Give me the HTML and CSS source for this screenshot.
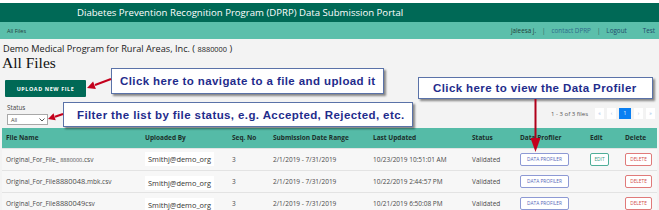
FILE: index.html
```html
<!DOCTYPE html>
<html lang="en">
<head>
<meta charset="utf-8">
<title>All Files - DPRP</title>
<link rel="stylesheet" href="styles.css">
</head>
<body>
<div class="app">
  <header class="brand">Diabetes Prevention Recognition Program (DPRP) Data Submission Portal</header>
  <nav class="subnav">
    <span class="crumb">All Files</span>
    <span class="user">
      <span>jaleesa j.</span><span class="sep">|</span><span class="link">contact DPRP</span><span class="sep">|</span><span class="link2">Logout</span><span class="test">Test</span>
    </span>
  </nav>
  <main class="main">
    <div class="org">Demo Medical Program for Rural Areas, Inc. ( <span class="orgnum">8880000</span> )</div>
    <h1 class="title">All Files</h1>
    <button class="upload">UPLOAD NEW FILE</button>
    <div class="filterbar">
      <div class="status">
        <div class="status-label">Status</div>
        <div class="select"><span>All</span>
          <svg class="chev" width="6" height="4" viewBox="0 0 6 4"><path d="M0.5 0.5 L3 3 L5.5 0.5" fill="none" stroke="#555" stroke-width="1"/></svg>
        </div>
      </div>
      <div class="pager">
        <span class="count">1 - 3 of 3 files</span>
        <span class="pg">«</span>
        <span class="pg">‹</span>
        <span class="pg active">1</span>
        <span class="pg">›</span>
        <span class="pg">»</span>
      </div>
    </div>
    <table class="files">
      <colgroup>
        <col class="w-name"><col class="w-by"><col class="w-seq"><col class="w-range"><col class="w-upd"><col class="w-status"><col class="w-dp"><col class="w-edit"><col class="w-del">
      </colgroup>
      <thead>
        <tr><th>File Name</th><th>Uploaded By</th><th>Seq. No</th><th>Submission Date Range</th><th>Last Updated</th><th>Status</th><th>Data Profiler</th><th>Edit</th><th>Delete</th></tr>
      </thead>
      <tbody>
        <tr>
          <td>Original_For_File_ <span class="num-sm">8880000</span>.csv</td>
          <td><span class="who">Smithj@demo_org</span></td>
          <td>3</td>
          <td>2/1/2019 - 7/31/2019</td>
          <td>10/23/2019 10:51:01 AM</td>
          <td>Validated</td>
          <td><span class="btn dp">DATA PROFILER</span></td>
          <td><span class="btn edit">EDIT</span></td>
          <td><span class="btn del">DELETE</span></td>
        </tr>
        <tr>
          <td>Original_For_File<span class="num-lg">8880048</span>.mbk.csv</td>
          <td><span class="who low">Smithj@demo_org</span></td>
          <td>3</td>
          <td>2/1/2019 - 7/31/2019</td>
          <td>10/22/2019 2:44:57 PM</td>
          <td>Validated</td>
          <td><span class="btn dp">DATA PROFILER</span></td>
          <td></td>
          <td><span class="btn del">DELETE</span></td>
        </tr>
        <tr>
          <td>Original_For_File<span class="num-lg">8880049</span>csv</td>
          <td><span class="who low">Smithj@demo_org</span></td>
          <td>3</td>
          <td>2/1/2019 - 7/31/2019</td>
          <td>10/21/2019 6:50:08 PM</td>
          <td>Validated</td>
          <td><span class="btn dp">DATA PROFILER</span></td>
          <td></td>
          <td><span class="btn del">DELETE</span></td>
        </tr>
      </tbody>
    </table>
  </main>

  <div class="callout c1">Click here to navigate to a file and upload it</div>
  <div class="callout c2">Filter the list by file status, e.g. Accepted, Rejected, etc.</div>
  <div class="callout c3">Click here to view the Data Profiler</div>

  <svg class="arrows" width="659" height="210" viewBox="0 0 659 210">
    <line x1="111" y1="79" x2="95" y2="85" stroke="#c4001c" stroke-width="2"/>
    <polygon points="87,88 95.9,89 93.1,81.4" fill="#c4001c"/>
    <line x1="63" y1="114" x2="55" y2="116.7" stroke="#c4001c" stroke-width="2"/>
    <polygon points="48,119 55.7,120.3 53.5,113.3" fill="#c4001c"/>
    <line x1="535.5" y1="99" x2="535.5" y2="140" stroke="#b0001a" stroke-width="2"/>
    <polygon points="530.5,138 540.5,138 535.5,152" fill="#c4001c"/>
  </svg>
</div>
</body>
</html>
```
FILE: styles.css
```css
* { box-sizing: border-box; margin: 0; padding: 0; }
html, body { width: 659px; height: 210px; overflow: hidden; }
body {
  background: #fff;
  padding-top: 3px;
  font-family: "Open Sans", "Liberation Sans", sans-serif;
  color: #333;
}
.app {
  position: relative;
  height: 207px;
  background: #f3f3f3;
  overflow: hidden;
}
.brand {
  height: 19px;
  background: #006956;
  color: #fff;
  font-size: 9.6px;
  line-height: 19px;
  padding-left: 77px;
  white-space: nowrap;
}
.subnav {
  height: 17px;
  background: #5bbfab;
  display: flex;
  justify-content: space-between;
  align-items: center;
  padding: 0 4px 0 7px;
  font-size: 5.5px;
  color: #24413b;
}
.user { display: flex; gap: 6px; align-items: center; font-size: 6.3px; }
.user .sep { color: #2f5f56; }
.user .link { color: #2e6a8a; }
.user .link2 { color: #1f4a6a; margin-right: 10px; }
.user .test { color: #1f4a6a; }

.main { padding: 4px 2px 0 2px; }
.org {
  font-size: 9.2px;
  line-height: 12px;
  color: #222;
  padding-left: 1px;
  white-space: nowrap;
}
.orgnum { font-size: 7.4px; }
.title {
  font-family: "Liberation Serif", "Times New Roman", serif;
  font-weight: normal;
  font-size: 15.5px;
  line-height: 16px;
  color: #111;
}
.upload {
  display: block;
  margin: 9px 0 0 3px;
  width: 81px;
  height: 17px;
  border: none;
  border-radius: 1px;
  background: #006956;
  color: #fff;
  font-family: "Open Sans", sans-serif;
  font-weight: 700;
  font-size: 5.4px;
  letter-spacing: 0.6px;
}
.filterbar {
  display: flex;
  justify-content: space-between;
  align-items: flex-start;
  height: 26px;
  margin-top: 5px;
}
.status { padding: 2px 0 0 5px; }
.status-label { font-size: 6.3px; line-height: 8px; color: #444; }
.select {
  margin-top: 2px;
  width: 41px;
  height: 11px;
  background: #fff;
  border: 1px solid #a8a8a8;
  display: flex;
  align-items: center;
  justify-content: space-between;
  padding: 0 2px 0 3px;
  font-size: 5.5px;
  color: #444;
}
.pager {
  display: flex;
  align-items: center;
  gap: 3px;
  margin: 6px 2px 0 0;
}
.count { font-size: 6px; color: #555; margin-right: 4px; }
.pg {
  width: 9px;
  height: 11px;
  background: #fff;
  color: #8fb4e6;
  font-size: 5px;
  line-height: 11px;
  text-align: center;
}
.pg.active { width: 12px; background: #0a7ff2; color: #fff; }

.files {
  width: 655px;
  border-collapse: collapse;
  table-layout: fixed;
  font-size: 6.5px;
  color: #4a4a4a;
}
.w-name { width: 139px; }
.w-by { width: 87px; }
.w-seq { width: 41px; }
.w-range { width: 100px; }
.w-upd { width: 99px; }
.w-status { width: 48px; }
.w-dp { width: 70px; }
.w-edit { width: 35px; }
.w-del { width: 36px; }
.files th {
  background: #55bba7;
  height: 20px;
  text-align: left;
  font-weight: 700;
  padding-left: 4px;
  color: #1c2f2b;
  white-space: nowrap;
}
.files td {
  height: 22px;
  padding-left: 4px;
  border-top: 1px solid #e3e3e3;
  background: #f7f7f7;
  white-space: nowrap;
}
.num-sm { font-size: 5.5px; }
.num-lg { font-size: 7.4px; }
.who {
  display: inline-block;
  background: #fff;
  padding: 2px 3px;
  font-size: 7.4px;
  color: #333;
}
.who.low { position: relative; top: 2px; }
.btn {
  display: inline-block;
  height: 13px;
  line-height: 11px;
  border: 1px solid;
  border-radius: 2px;
  background: #fff;
  font-size: 4.8px;
  text-align: center;
  vertical-align: middle;
}
.btn.dp { width: 49px; border-color: #8d99d4; color: #5566b8; }
.btn.edit { width: 19px; border-color: #4fae98; color: #3a9a83; }
.btn.del { width: 27px; border-color: #e07a7a; color: #d24a4a; }

.callout {
  position: absolute;
  display: flex;
  align-items: center;
  background: #fff;
  border: 1px solid #5a72a8;
  box-shadow: 2px 2px 2px rgba(0, 0, 0, 0.45);
  font-family: "Liberation Sans", Arial, sans-serif;
  font-weight: 700;
  font-size: 11.5px;
  letter-spacing: 0.4px;
  color: #1f2c8c;
  white-space: nowrap;
}
.c1 { left: 111px; top: 65px; width: 273px; height: 26px; padding-left: 8px; }
.c2 { left: 63px; top: 99px; width: 350px; height: 25px; padding-left: 13px; }
.c3 { left: 418px; top: 74px; width: 235px; height: 22px; padding-left: 14px; }
.arrows { position: absolute; left: 0; top: -3px; }
```
